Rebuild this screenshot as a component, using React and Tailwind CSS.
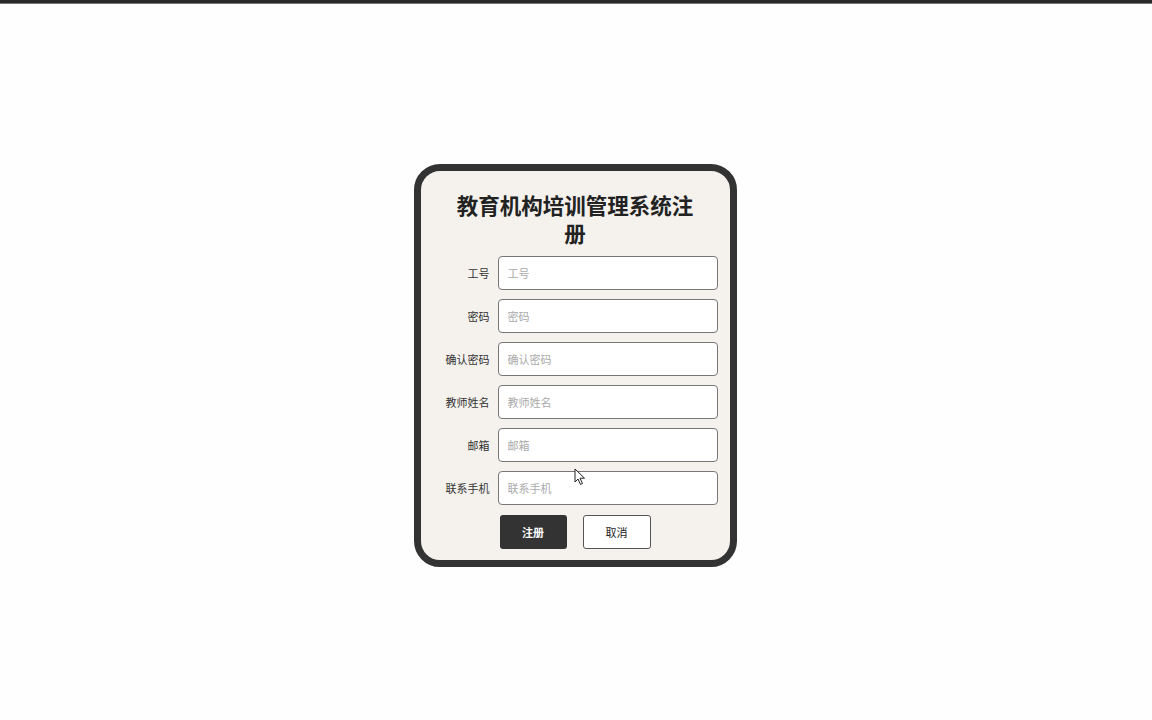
import { useState } from 'react';

const fields = [
  { name: 'id', label: '工号', type: 'text' },
  { name: 'password', label: '密码', type: 'password' },
  { name: 'confirm', label: '确认密码', type: 'password' },
  { name: 'teacherName', label: '教师姓名', type: 'text' },
  { name: 'email', label: '邮箱', type: 'text' },
  { name: 'phone', label: '联系手机', type: 'text' },
];

const Cursor = () => (
  <svg className="absolute left-[574px] top-[468px] pointer-events-none" width="12" height="18" viewBox="0 0 12 18">
    <path d="M1 1 L1 14 L4 11 L6.5 16.5 L8.5 15.5 L6 10.2 L10.5 10.2 Z" fill="#fff" stroke="#222" strokeWidth="1" strokeLinejoin="round" />
  </svg>
);

export default function App() {
  const [form, setForm] = useState({});

  const handleChange = (e) => setForm({ ...form, [e.target.name]: e.target.value });

  return (
    <div
      className="relative w-[1152px] h-[720px] bg-[#fefefe] overflow-hidden"
      style={{ fontFamily: '"Noto Sans CJK SC", "Noto Sans", sans-serif' }}
    >
      <div className="h-[4px] bg-[#2a2a2a] border-b border-[#777]" />

      <div className="flex justify-center pt-[160px] pr-[2px]">
        <div className="w-[323px] border-[7px] border-[#333] rounded-[26px] bg-[#f5f2ee] px-3 pt-[20px] pb-[11px]">
          <h1 className="mx-auto w-[250px] text-center text-[21.5px] leading-[28px] font-bold text-[#222]">
            教育机构培训管理系统注册
          </h1>

          <form className="mt-[9px] flex flex-col gap-[9px]" onSubmit={(e) => e.preventDefault()}>
            {fields.map((f) => (
              <div key={f.name} className="flex items-center gap-2">
                <label className="flex-1 text-right text-[11px] text-[#333]">{f.label}</label>
                <input
                  name={f.name}
                  type={f.type}
                  value={form[f.name] || ''}
                  onChange={handleChange}
                  placeholder={f.label}
                  className="w-[220px] h-[34px] px-[9px] text-[11px] bg-white border border-[#777] rounded-[4px] outline-none placeholder:text-[#aaa]"
                />
              </div>
            ))}

            <div className="flex justify-center gap-4 mt-[1px]">
              <button type="submit" className="w-[67px] h-[34px] bg-[#333] text-white text-[11px] font-bold rounded-[3px]">
                注册
              </button>
              <button type="button" className="w-[68px] h-[34px] bg-white text-[#222] text-[11px] border border-[#555] rounded-[3px]">
                取消
              </button>
            </div>
          </form>
        </div>
      </div>

      <Cursor />
    </div>
  );
}
